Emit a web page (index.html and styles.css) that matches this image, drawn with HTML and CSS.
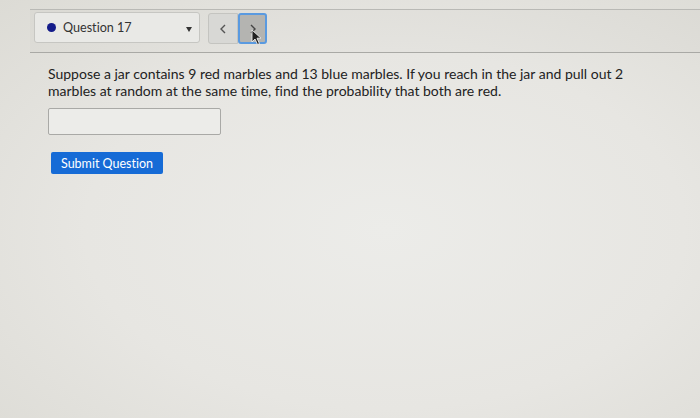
FILE: index.html
```html
<!DOCTYPE html>
<html>
<head>
<meta charset="utf-8">
<link rel="stylesheet" href="styles.css">
</head>
<body>
<div class="page">
  <div class="navbar">
    <div class="select">
      <span class="dot"></span>
      <span class="qlabel">Question 17</span>
      <span class="caret"></span>
    </div>
    <div class="pager">
      <div class="pbtn prev">
        <svg width="8" height="10" viewBox="0 0 8 10"><path d="M6 1 L2 5 L6 9" fill="none" stroke="#555" stroke-width="1.4"/></svg>
      </div>
      <div class="pbtn next">
        <svg width="8" height="10" viewBox="0 0 8 10"><path d="M2 1 L6 5 L2 9" fill="none" stroke="#444" stroke-width="1.4"/></svg>
        <svg class="cursor" width="11" height="17" viewBox="0 0 11 17"><path d="M1 1 L1 13 L4 10 L6.5 15.5 L8.5 14.6 L6 9.2 L10 9.2 Z" fill="#222" stroke="#eee" stroke-width="0.9"/></svg>
      </div>
    </div>
  </div>
  <div class="content">
    <p class="question">Suppose a jar contains 9 red marbles and 13 blue marbles. If you reach in the jar and pull out 2 marbles at random at the same time, find the probability that both are red.</p>
    <div class="answer"></div>
    <button class="submit">Submit Question</button>
  </div>
</div>
</body>
</html>
```
FILE: styles.css
```css
html, body {
  margin: 0;
  padding: 0;
  height: 100%;
}
body {
  background: radial-gradient(ellipse at 55% 55%, #ecece9 0%, #e7e6e2 55%, #dcdbd5 100%);
  font-family: "Lato", "Open Sans", sans-serif;
  font-variant-ligatures: none;
  color: #2a2a2a;
  overflow: hidden;
}
.page {
  padding: 9px 0 0 30px;
}
.navbar {
  border-top: 1px solid #b9b9b5;
  border-bottom: 1px solid #a9a9a5;
  display: flex;
  align-items: flex-start;
  padding-left: 4px;
  padding-top: 2px;
  box-sizing: border-box;
  height: 44px;
  background: rgba(0,0,0,0.012);
}
.select {
  width: 166px;
  height: 31px;
  box-sizing: border-box;
  border: 1px solid #c6c6c2;
  border-radius: 3px;
  display: flex;
  align-items: center;
  padding-left: 12px;
  background: #e9e9e6;
}
.dot {
  width: 9px;
  height: 9px;
  border-radius: 50%;
  background: #141c8a;
  margin-right: 7px;
}
.qlabel {
  font-size: 12.6px;
  color: #333;
  flex: 1;
}
.caret {
  width: 0;
  height: 0;
  border-left: 3.5px solid transparent;
  border-right: 3.5px solid transparent;
  border-top: 5px solid #333;
  margin-right: 7px;
  margin-top: 3px;
}
.pager {
  display: flex;
  margin-left: 8px;
  margin-top: 1px;
}
.pbtn {
  height: 31px;
  box-sizing: border-box;
  display: flex;
  align-items: center;
  justify-content: center;
  position: relative;
}
.prev {
  width: 30px;
  background: #d8d8d5;
  border: 1px solid #c4c4c0;
  border-radius: 3px 0 0 3px;
}
.next {
  width: 29px;
  background: #b4b4b1;
  border: 2px solid #5a9ae0;
  border-radius: 3px;
}
.cursor {
  position: absolute;
  left: 11px;
  top: 14px;
}
.content {
  padding: 12px 0 0 18px;
}
.question {
  margin: 0;
  font-size: 14px;
  line-height: 17px;
  width: 600px;
  color: #222;
}
.answer {
  margin-top: 9px;
  width: 173px;
  height: 27px;
  box-sizing: border-box;
  border: 1px solid #a9a9a6;
  border-radius: 2px;
  background: #ecece9;
}
.submit {
  display: block;
  margin: 17px 0 0 3px;
  width: 112px;
  height: 22px;
  border: none;
  border-radius: 2px;
  background: #166bd6;
  color: #fff;
  font-family: "Lato", "Open Sans", sans-serif;
  font-variant-ligatures: none;
  font-size: 12.5px;
  padding: 0;
}
```
